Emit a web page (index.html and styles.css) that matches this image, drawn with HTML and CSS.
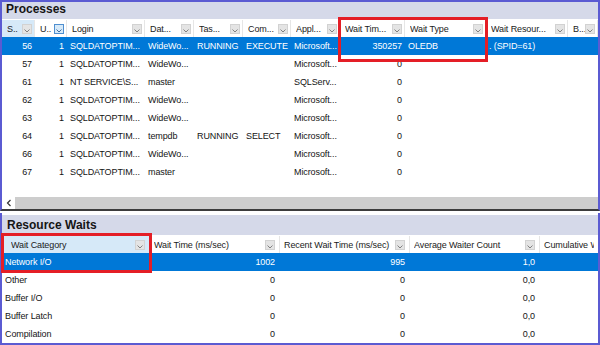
FILE: index.html
```html
<!DOCTYPE html>
<html>
<head>
<meta charset="utf-8">
<link rel="stylesheet" href="styles.css">
</head>
<body>
<svg width="0" height="0" class="defs">
  <defs>
    <symbol id="dd" viewBox="0 0 10 10">
      <rect x="0.5" y="0.5" width="9" height="9" fill="#e4e4e4" stroke="#d2d2d2"/>
      <polyline points="2.5,5.5 5,8 7.5,5.5" fill="none" stroke="#808080" stroke-width="1"/>
    </symbol>
    <symbol id="ddh" viewBox="0 0 10 10">
      <rect x="0.5" y="0.5" width="9" height="9" fill="#d6e9f8" stroke="#4f8fd0"/>
      <polyline points="2.5,5.5 5,8 7.5,5.5" fill="none" stroke="#3a6ea5" stroke-width="1"/>
    </symbol>
  </defs>
</svg>

<div class="panel proc">
  <div class="title">Processes</div>
  <div class="row head">
    <div class="hc hot"><span>S..</span><svg><use href="#dd"/></svg></div>
    <div class="hc"><span>U..</span><svg><use href="#ddh"/></svg></div>
    <div class="hc"><span>Login</span><svg><use href="#dd"/></svg></div>
    <div class="hc"><span>Dat...</span><svg><use href="#dd"/></svg></div>
    <div class="hc"><span>Tas...</span><svg><use href="#dd"/></svg></div>
    <div class="hc"><span>Com...</span><svg><use href="#dd"/></svg></div>
    <div class="hc"><span>Appl...</span><svg><use href="#dd"/></svg></div>
    <div class="hc"><span>Wait Tim...</span><svg><use href="#dd"/></svg></div>
    <div class="hc"><span>Wait Type</span><svg><use href="#dd"/></svg></div>
    <div class="hc"><span>Wait Resour...</span><svg><use href="#dd"/></svg></div>
    <div class="hc"><span>B...</span><svg><use href="#dd"/></svg></div>
  </div>
  <div class="row sel">
    <div class="c n">56</div><div class="c n">1</div><div class="c">SQLDATOPTIM...</div><div class="c">WideWo...</div><div class="c">RUNNING</div><div class="c">EXECUTE</div><div class="c">Microsoft...</div><div class="c n">350257</div><div class="c">OLEDB</div><div class="c">. (SPID=61)</div><div class="c"></div>
  </div>
  <div class="row">
    <div class="c n">57</div><div class="c n">1</div><div class="c">SQLDATOPTIM...</div><div class="c">WideWo...</div><div class="c"></div><div class="c"></div><div class="c">Microsoft...</div><div class="c n">0</div><div class="c"></div><div class="c"></div><div class="c"></div>
  </div>
  <div class="row">
    <div class="c n">61</div><div class="c n">1</div><div class="c">NT SERVICE\S...</div><div class="c">master</div><div class="c"></div><div class="c"></div><div class="c">SQLServ...</div><div class="c n">0</div><div class="c"></div><div class="c"></div><div class="c"></div>
  </div>
  <div class="row">
    <div class="c n">62</div><div class="c n">1</div><div class="c">SQLDATOPTIM...</div><div class="c">WideWo...</div><div class="c"></div><div class="c"></div><div class="c">Microsoft...</div><div class="c n">0</div><div class="c"></div><div class="c"></div><div class="c"></div>
  </div>
  <div class="row">
    <div class="c n">63</div><div class="c n">1</div><div class="c">SQLDATOPTIM...</div><div class="c">WideWo...</div><div class="c"></div><div class="c"></div><div class="c">Microsoft...</div><div class="c n">0</div><div class="c"></div><div class="c"></div><div class="c"></div>
  </div>
  <div class="row">
    <div class="c n">64</div><div class="c n">1</div><div class="c">SQLDATOPTIM...</div><div class="c">tempdb</div><div class="c">RUNNING</div><div class="c">SELECT</div><div class="c">Microsoft...</div><div class="c n">0</div><div class="c"></div><div class="c"></div><div class="c"></div>
  </div>
  <div class="row">
    <div class="c n">66</div><div class="c n">1</div><div class="c">SQLDATOPTIM...</div><div class="c">WideWo...</div><div class="c"></div><div class="c"></div><div class="c">Microsoft...</div><div class="c n">0</div><div class="c"></div><div class="c"></div><div class="c"></div>
  </div>
  <div class="row">
    <div class="c n">67</div><div class="c n">1</div><div class="c">SQLDATOPTIM...</div><div class="c">master</div><div class="c"></div><div class="c"></div><div class="c">Microsoft...</div><div class="c n">0</div><div class="c"></div><div class="c"></div><div class="c"></div>
  </div>
  <div class="spacer"></div>
  <div class="hs">
    <div class="arr"><svg width="6" height="8" viewBox="0 0 6 8"><polyline points="4.5,1 1.5,4 4.5,7" fill="none" stroke="#333" stroke-width="1.2"/></svg></div>
    <div class="thumb"></div>
  </div>
</div>

<div class="panel waits">
  <div class="title">Resource Waits</div>
  <div class="row head">
    <div class="hc hot first"><span>Wait Category</span><svg><use href="#dd"/></svg></div>
    <div class="hc"><span>Wait Time (ms/sec)</span><svg><use href="#dd"/></svg></div>
    <div class="hc"><span>Recent Wait Time (ms/sec)</span><svg><use href="#dd"/></svg></div>
    <div class="hc"><span>Average Waiter Count</span><svg><use href="#dd"/></svg></div>
    <div class="hc last"><span>Cumulative Wait Time</span></div>
  </div>
  <div class="row sel">
    <div class="c">Network I/O</div><div class="c n">1002</div><div class="c n">995</div><div class="c n">1,0</div><div class="c"></div>
  </div>
  <div class="row">
    <div class="c">Other</div><div class="c n">0</div><div class="c n">0</div><div class="c n">0,0</div><div class="c"></div>
  </div>
  <div class="row">
    <div class="c">Buffer I/O</div><div class="c n">0</div><div class="c n">0</div><div class="c n">0,0</div><div class="c"></div>
  </div>
  <div class="row">
    <div class="c">Buffer Latch</div><div class="c n">0</div><div class="c n">0</div><div class="c n">0,0</div><div class="c"></div>
  </div>
  <div class="row">
    <div class="c">Compilation</div><div class="c n">0</div><div class="c n">0</div><div class="c n">0,0</div><div class="c"></div>
  </div>
</div>

<div class="redbox rb1"></div>
<div class="redbox rb2"></div>
</body>
</html>
```
FILE: styles.css
```css
* { box-sizing: border-box; margin: 0; padding: 0; }
html, body { width: 600px; height: 345px; overflow: hidden; background: #fff; }
body {
  position: relative;
  font-family: "Liberation Sans", Arial, sans-serif;
  font-size: 9px;
  letter-spacing: -0.1px;
  color: #141414;
}
.defs { position: absolute; }

.panel {
  display: flex;
  flex-direction: column;
  border-left: 2px solid #5b5bd2;
  border-right: 2px solid #5b5bd2;
}
.proc {
  height: 211px;
  border-top: 2px solid #5b5bd2;
  border-bottom: 2px solid #3c3c3c;
}
.waits {
  height: 132px;
  margin-top: 2px;
  padding-top: 2px;
  border-bottom: 2px solid #5b5bd2;
}

.title {
  height: 17px;
  line-height: 17px;
  padding-left: 4px;
  background: #d5d9e9;
  font: bold 12px "Liberation Sans", Arial, sans-serif;
  letter-spacing: 0;
  color: #151515;
}
.waits .title { height: 20px; line-height: 20px; padding-left: 5px; }

.row {
  display: grid;
  height: 18px;
  align-items: center;
  flex: none;
}
.proc .row { grid-template-columns: 33px 32px 78px 49px 49px 48px 49px 65px 81px 82px 30px; }
.waits .row { grid-template-columns: 148px 130px 130px 130px 58px; }

.row.head { height: 17px; margin-top: 1px; }
.hc {
  display: flex;
  align-items: center;
  height: 100%;
  padding: 0 2px 0 5px;
  border-right: 1px solid #e6e6e6;
  white-space: nowrap;
  overflow: hidden;
  color: #1a1a1a;
}
.hc span { flex: 1; overflow: hidden; }
.hc svg { flex: none; width: 10px; height: 10px; }
.hc.hot { background: #d6e9f8; }
.waits .hc { padding: 0 4px 0 4px; }
.waits .hc.first { padding-left: 7px; margin-left: 2px; }
.waits .hc.last { border-right: none; }

.c {
  padding: 0 3px;
  white-space: nowrap;
  overflow: hidden;
}
.n { text-align: right; }
.waits .c.n { padding-right: 5px; }
.sel { background: #0078d7; color: #fff; }

.spacer { flex: 1; }
.hs { height: 12px; display: flex; flex: none; }
.hs .arr { width: 13px; display: flex; align-items: center; padding-left: 4px; }
.hs .thumb { flex: 1; background: #cdcdcd; }

.redbox {
  position: absolute;
  border: 3px solid #e41e26;
}
.rb1 { left: 338px; top: 17px; width: 150px; height: 45px; }
.rb2 { left: 1px; top: 233px; width: 151px; height: 40px; }
```
